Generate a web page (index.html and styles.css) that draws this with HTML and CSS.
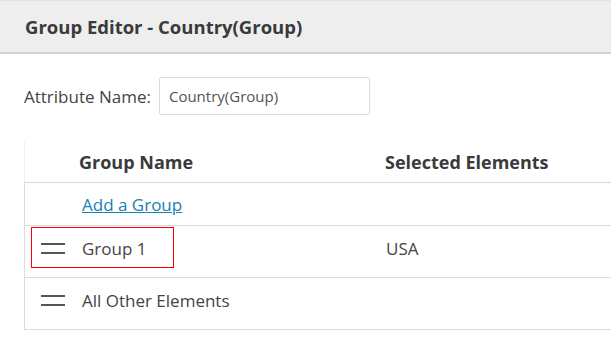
FILE: index.html
```html
<!DOCTYPE html>
<html lang="en">
<head>
  <meta charset="UTF-8">
  <title>Group Editor</title>
  <link rel="stylesheet" href="styles.css">
</head>
<body>
  <div class="title-bar">Group Editor - Country(Group)</div>

  <div class="attr-row">
    <label for="attr-name">Attribute Name:</label>
    <input id="attr-name" class="attr-input" type="text" value="Country(Group)">
  </div>

  <div class="groups">
    <div class="groups-head">
      <div class="col-name">Group Name</div>
      <div class="col-elements">Selected Elements</div>
    </div>

    <div class="group-row add-row">
      <div class="col-name"><a href="#" class="add-link">Add a Group</a></div>
      <div class="col-elements"></div>
    </div>

    <div class="group-row">
      <div class="col-name">
        <div class="name-box selected">
          <span class="handle"></span>
          <span>Group 1</span>
        </div>
      </div>
      <div class="col-elements">USA</div>
    </div>

    <div class="group-row">
      <div class="col-name">
        <div class="name-box">
          <span class="handle"></span>
          <span>All Other Elements</span>
        </div>
      </div>
      <div class="col-elements"></div>
    </div>
  </div>
</body>
</html>
```

FILE: styles.css
```css
body {
  margin: 0;
  font-family: "Open Sans", Arial, sans-serif;
  font-size: 17px;
  color: #444;
  background: #fff;
}

.title-bar {
  height: 54px;
  box-sizing: border-box;
  display: flex;
  align-items: center;
  padding-left: 25px;
  background: #eeeeee;
  border-top: 1px solid #e2e2e2;
  border-bottom: 2px solid #d2d2d2;
  font-size: 18.5px;
  font-weight: bold;
  color: #3a3a3a;
}

.attr-row {
  display: flex;
  align-items: center;
  gap: 8px;
  margin-top: 23px;
  padding-left: 24px;
}

.attr-input {
  width: 211px;
  height: 38px;
  box-sizing: border-box;
  border: 1px solid #dcdcdc;
  border-radius: 2px;
  padding: 0 9px;
  font: 15px "Open Sans", Arial, sans-serif;
  color: #555;
}

.groups {
  margin: 26px 0 0 24px;
}

.groups-head {
  display: flex;
  align-items: center;
  height: 41px;
  border-left: 1px solid #f3f3f3;
  border-bottom: 1px solid #d8d8d8;
  font-size: 18px;
  font-weight: bold;
  color: #3a3a3a;
}

.groups-head .col-name {
  padding-left: 54px;
}

.col-name {
  width: 360px;
  box-sizing: border-box;
}

.col-elements {
  flex: 1;
}

.group-row {
  display: flex;
  align-items: flex-start;
  height: 51px;
  border-left: 1px solid #dcdcdc;
  border-bottom: 1px solid #dcdcdc;
}

.group-row .col-elements {
  padding-top: 11px;
  padding-left: 1px;
}

.add-row {
  height: 42px;
  align-items: center;
}

.add-row .col-name {
  padding-left: 57px;
}

.add-link {
  color: #1a80b2;
}

.name-box {
  display: flex;
  align-items: center;
  gap: 17px;
  width: 143px;
  height: 41px;
  box-sizing: border-box;
  margin: 1px 0 0 6px;
  padding: 1px 0 0 10px;
  white-space: nowrap;
}

.selected {
  outline: 1px solid red;
  outline-offset: -1px;
}

.handle {
  width: 24px;
  height: 7px;
  flex: none;
  border-top: 2px solid #555;
  border-bottom: 2px solid #555;
}
```
